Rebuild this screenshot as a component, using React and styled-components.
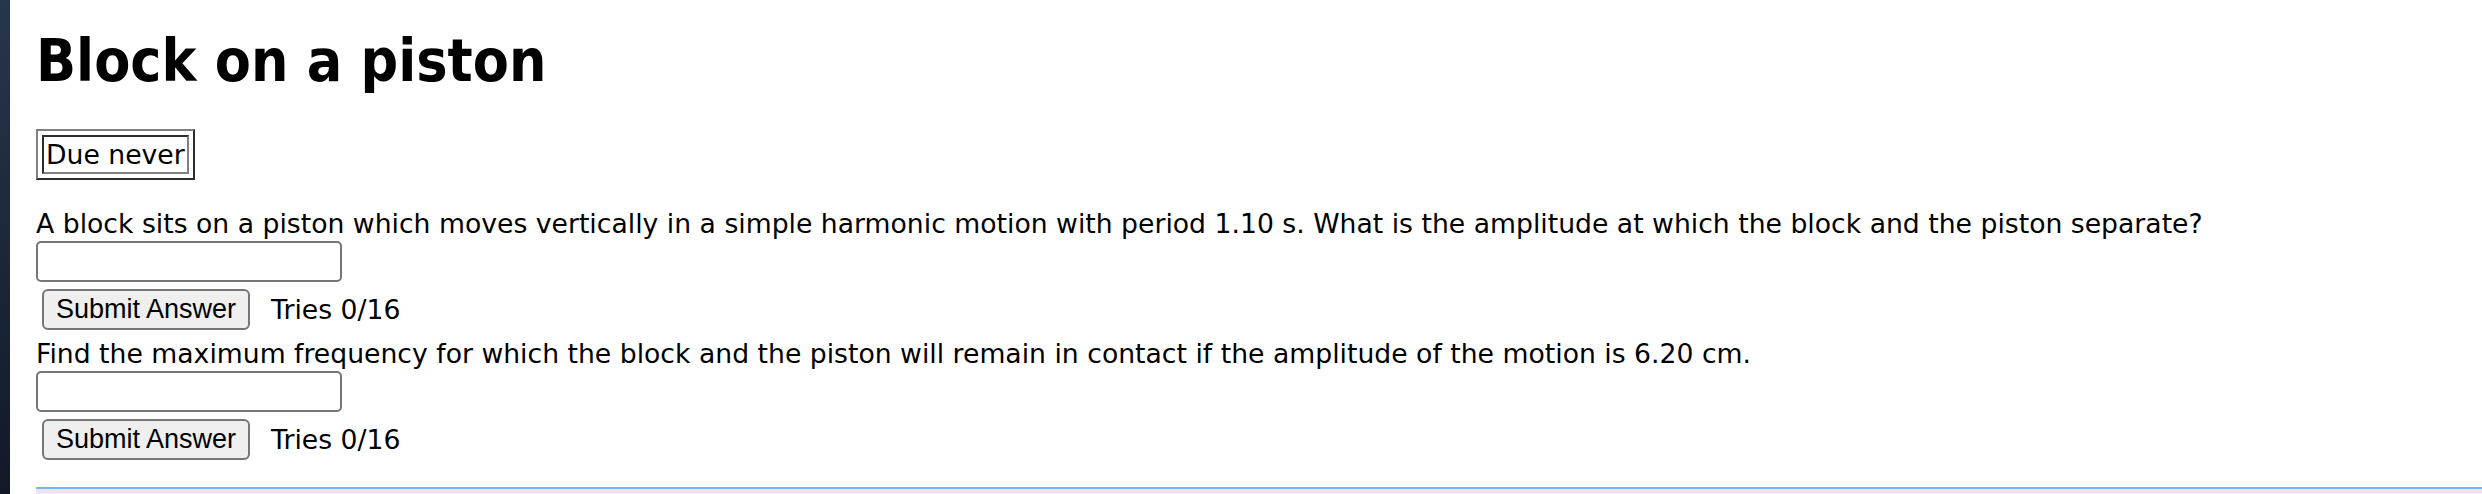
import styled, { createGlobalStyle } from "styled-components";

const GlobalStyle = createGlobalStyle`
  html, body {
    margin: 0;
    padding: 0;
  }
  body {
    height: 494px;
    overflow: hidden;
    background: linear-gradient(#27354e, #111927);
  }
`;

const questions = [
  {
    id: 1,
    text: "A block sits on a piston which moves vertically in a simple harmonic motion with period 1.10 s. What is the amplitude at which the block and the piston separate?",
    tries: "0/16",
  },
  {
    id: 2,
    text: "Find the maximum frequency for which the block and the piston will remain in contact if the amplitude of the motion is 6.20 cm.",
    tries: "0/16",
  },
];

export default function App() {
  return (
    <>
      <GlobalStyle />
      <Window>
        <Title>Block on a piston</Title>
        <DueTable>
          <tbody>
            <tr>
              <DueCell>Due never</DueCell>
            </tr>
          </tbody>
        </DueTable>
        {questions.map((q, i) => (
          <Question key={q.id} first={i === 0}>
            <Prompt>{q.text}</Prompt>
            <AnswerInput type="text" />
            <ActionRow>
              <SubmitButton>Submit Answer</SubmitButton>
              <Tries>Tries {q.tries}</Tries>
            </ActionRow>
          </Question>
        ))}
        <Footer />
      </Window>
    </>
  );
}

const Window = styled.div`
  margin-left: 10px;
  height: 494px;
  box-sizing: border-box;
  padding: 30px 0 0 26px;
  background: #ffffff;
  color: #000000;
  font-family: "DejaVu Sans", Verdana, sans-serif;
  font-size: 26.67px;
  display: flex;
  flex-direction: column;
`;

const Title = styled.h1`
  margin: 0;
  font-family: "DejaVu Sans Condensed", "DejaVu Sans", sans-serif;
  font-stretch: condensed;
  font-size: 58.5px;
  font-weight: bold;
  line-height: 62px;
`;

const DueTable = styled.table`
  margin-top: 37px;
  align-self: flex-start;
  border-spacing: 4px;
  border-style: solid;
  border-width: 2px;
  border-color: #808080 #2d2d2d #2d2d2d #808080;
`;

const DueCell = styled.td`
  padding: 2px;
  line-height: 31px;
  border-style: solid;
  border-width: 2px;
  border-color: #2d2d2d #808080 #808080 #2d2d2d;
`;

const Question = styled.div`
  margin-top: ${(p) => (p.first ? "28px" : "8px")};
`;

const Prompt = styled.div`
  line-height: 31px;
  white-space: nowrap;
`;

const AnswerInput = styled.input`
  display: block;
  width: 306px;
  height: 41px;
  margin: 2px 0 0;
  box-sizing: border-box;
  border: 2px solid #767676;
  border-radius: 5px;
  background: #ffffff;
`;

const ActionRow = styled.div`
  display: flex;
  align-items: center;
  margin-top: 7px;
  padding-left: 6px;
`;

const SubmitButton = styled.button`
  height: 41px;
  padding: 0 12px;
  box-sizing: border-box;
  font-family: "Liberation Sans", Arial, sans-serif;
  font-size: 27px;
  color: #000000;
  background: #efefef;
  border: 2px solid #767676;
  border-radius: 6px;
`;

const Tries = styled.span`
  margin-left: 21px;
  line-height: 31px;
`;

const Footer = styled.div`
  margin-top: 27px;
  flex: 1;
  border-top: 2px solid #7fb2ee;
  background: #e9e6fa;
`;
